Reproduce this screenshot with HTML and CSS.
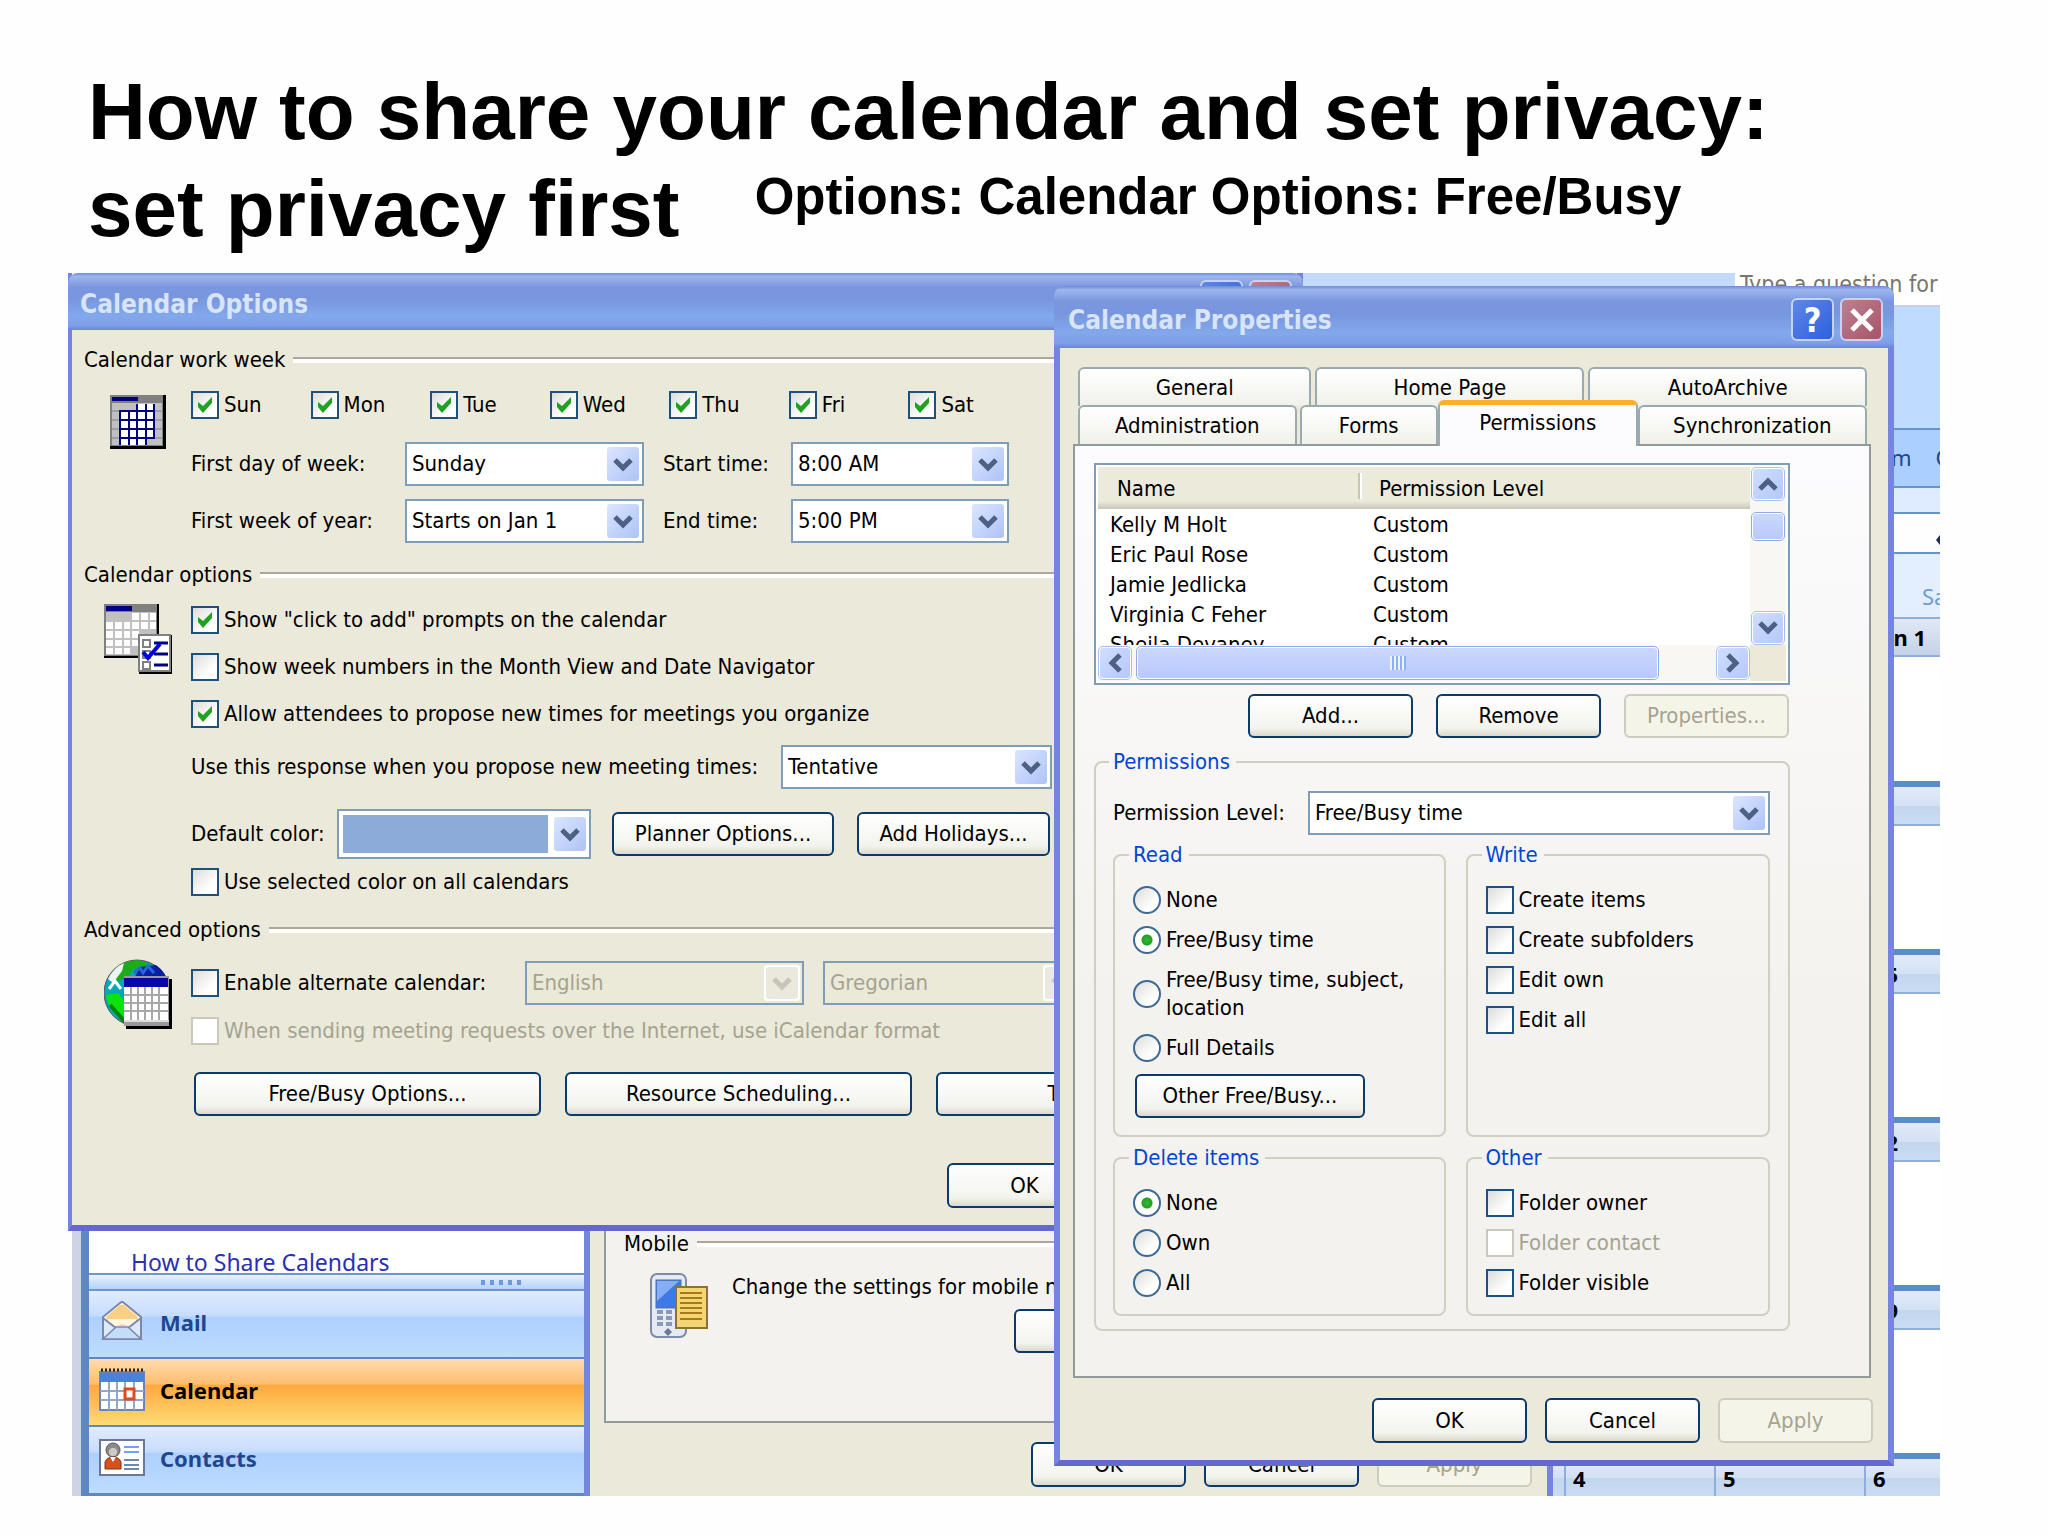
FILE: index.html
```html
<!DOCTYPE html>
<html lang="en">
<head>
  <meta charset="utf-8">
  <title>How to share your calendar</title>
  <link rel="stylesheet" href="styles.css">
</head>
<body>
  <h1>How to share your calendar and set privacy:<br>set privacy first <small>Options: Calendar Options: Free/Busy</small></h1>

  <div class="desktop">

    <!-- Outlook main window -->
    <div class="outlook">
      <div class="menubar"><span>Type a question for</span></div>
      <div class="panes">
        <nav class="sidebar">
          <a class="howto" href="#">How to Share Calendars</a>
          <div class="splitter"><i></i><i></i><i></i><i></i><i></i></div>
          <a class="nav-item" href="#">
            <svg width="44" height="44" viewBox="0 0 44 44">
              <path d="M3 17L20 3q2-2 4 0l17 14v21H3z" fill="#fff" stroke="#7d88a8" stroke-width="2"/>
              <path d="M6 17L20 5q2-1 4 0l14 12-3 9H9z" fill="#f9cf86"/>
              <path d="M8 19h28v10L22 24 8 30z" fill="#fff6e4"/>
              <path d="M3 18l13 10h12l13-10v21H3z" fill="#dbe9fb" stroke="#7d88a8" stroke-width="2"/>
              <path d="M3 39l13-12h12l13 12z" fill="#c3dcf8" stroke="#7d88a8" stroke-width="1.5"/>
            </svg>
            Mail
          </a>
          <a class="nav-item active" href="#">
            <svg width="48" height="44" viewBox="0 0 48 44">
              <rect x="2" y="4" width="44" height="38" fill="#fff" stroke="#6a86b8" stroke-width="2"/>
              <path d="M3 2h42" stroke="#222" stroke-width="3" stroke-dasharray="2 2"/>
              <rect x="2" y="5" width="44" height="9" fill="#4a80de"/>
              <path d="M11 14v28M19 14v28M27 14v28M36 14v28M2 23h44M2 32h44" stroke="#93a6c8" stroke-width="2"/>
              <rect x="27" y="21" width="9" height="10" fill="#fff" stroke="#e0491c" stroke-width="3"/>
            </svg>
            Calendar
          </a>
          <a class="nav-item" href="#">
            <svg width="48" height="40" viewBox="0 0 48 40">
              <rect x="2" y="2" width="44" height="35" fill="#fff" stroke="#6a7896" stroke-width="2"/>
              <circle cx="15" cy="12" r="7" fill="#8b8b8b" stroke="#555"/>
              <circle cx="15" cy="14" r="4" fill="#cfcac6"/>
              <path d="M7 31V24q2-5 8-5t8 5v7z" fill="#d4521d" stroke="#8d3010"/>
              <path d="M12 19l3 5 3-5z" fill="#fff"/>
              <path d="M26 9h15M26 14h15" stroke="#6fa2ea" stroke-width="2"/>
              <path d="M26 22h15M26 27h15M26 31h15" stroke="#6c87b0" stroke-width="2"/>
            </svg>
            Contacts
          </a>
        </nav>
        <div class="month">
          <div class="ribbon"></div>
          <div class="band"><span>m</span><span>Q</span></div>
          <div class="band-pad"></div>
          <div class="searchrow"><svg width="5" height="12" viewBox="0 0 5 12"><path d="M5 1L1 6l4 5z" fill="#1c2c5c"/></svg></div>
          <div class="weekday">Sat</div>
          <div class="weeks">
            <div class="week first"><b></b><b></b><b>Jan 1</b></div>
            <div class="week"><b></b><b></b><b>8</b></div>
            <div class="week"><b></b><b></b><b>15</b></div>
            <div class="week"><b></b><b></b><b>22</b></div>
            <div class="week"><b></b><b></b><b>29</b></div>
            <div class="week"><b>4</b><b>5</b><b>6</b></div>
          </div>
        </div>
      </div>
    </div>

    <!-- Options dialog -->
    <div class="window win-options">
      <div class="window-body">
        <div class="sheet">
          <div class="group-title">Mobile</div>
          <div class="mobile">
            <svg width="60" height="66" viewBox="0 0 60 66">
              <rect x="1" y="1" width="35" height="63" rx="6" fill="#e4e9f2" stroke="#7e8ba8" stroke-width="2"/>
              <rect x="6" y="7" width="25" height="28" fill="#3f79e6" stroke="#5470ac"/>
              <path d="M7 8h22L7 28z" fill="#86aef4"/>
              <path d="M7 39h6M16 39h6M7 45h6M16 45h6M7 51h6M16 51h6" stroke="#8b98b4" stroke-width="4"/>
              <path d="M18 55l4 4-4 4-4-4z" fill="#6a7896"/>
              <rect x="26" y="14" width="31" height="41" fill="#f3d672" stroke="#8c7330" stroke-width="2"/>
              <path d="M30 20h22M30 25h22M30 30h22M30 35h22M30 40h22M30 46h22" stroke="#a9771c" stroke-width="2"/>
            </svg>
            <div>
              <p>Change the settings for mobile notifications</p>
              <button>Notifications...</button>
            </div>
          </div>
        </div>
        <div class="footer">
          <button>OK</button>
          <button>Cancel</button>
          <button disabled>Apply</button>
        </div>
      </div>
    </div>

    <!-- Calendar Options dialog -->
    <div class="window win-calendar">
      <div class="titlebar">
        <span>Calendar Options</span>
        <button class="caption help" aria-label="Help">?</button>
        <button class="caption close" aria-label="Close"><svg width="26" height="26" viewBox="0 0 26 26"><path d="M3 3l20 20M23 3L3 23" stroke="#fff" stroke-width="5"/></svg></button>
      </div>
      <div class="window-body">
        <div class="group-title">Calendar work week</div>
        <div class="group work-week">
          <svg class="group-icon" width="56" height="54" viewBox="0 0 56 54">
            <rect width="56" height="54" fill="#000"/>
            <rect width="53" height="51" fill="#808080"/>
            <rect x="2" y="8" width="50" height="42" fill="#c0c0c0"/>
            <rect x="2" y="2" width="26" height="4" fill="#000080"/>
            <path d="M27 9h17v34h-8v7H10V16h17z" fill="#fff"/>
            <path d="M2 16h50M2 25h50M2 34h50M2 43h50" stroke="#808080"/>
            <path d="M10 50V16h34M27 9v41M44 9v34H10M19 16v34M36 9v41M10 25h34M10 34h34" fill="none" stroke="#000080" stroke-width="2"/>
          </svg>
          <div class="rows">
            <div class="days">
              <label><input type="checkbox" checked>Sun</label>
              <label><input type="checkbox" checked>Mon</label>
              <label><input type="checkbox" checked>Tue</label>
              <label><input type="checkbox" checked>Wed</label>
              <label><input type="checkbox" checked>Thu</label>
              <label><input type="checkbox" checked>Fri</label>
              <label><input type="checkbox" checked>Sat</label>
            </div>
            <div class="times">
              <label for="first-day">First day of week:</label>
              <select id="first-day"><option>Sunday</option></select>
              <label for="start">Start time:</label>
              <select id="start"><option>8:00 AM</option></select>
              <label for="first-week">First week of year:</label>
              <select id="first-week"><option>Starts on Jan 1</option></select>
              <label for="end">End time:</label>
              <select id="end"><option>5:00 PM</option></select>
            </div>
          </div>
        </div>

        <div class="group-title">Calendar options</div>
        <div class="group">
          <svg class="group-icon" width="68" height="70" viewBox="0 0 68 70">
            <rect width="55" height="54" fill="#000"/>
            <rect width="53" height="52" fill="#808080"/>
            <rect x="2" y="8" width="50" height="43" fill="#c0c0c0"/>
            <rect x="2" y="2" width="26" height="5" fill="#000080"/>
            <path d="M28 9h7v7h-7zM37 9h7v7h-7zM46 9h6v7h-6zM2 18h7v7H2zM11 18h7v7h-7zM20 18h6v7h-6zM28 18h7v7h-7zM37 18h7v7h-7zM46 18h6v7h-6zM2 27h7v7H2zM11 27h7v7h-7zM20 27h6v7h-6zM28 27h7v7h-7zM2 36h7v6H2zM11 36h7v6h-7zM20 36h6v6h-6zM28 36h7v6h-7zM2 44h7v6H2zM11 44h7v6h-7zM20 44h6v6h-6z" fill="#fff"/>
            <rect x="35" y="31" width="33" height="39" fill="#000"/>
            <rect x="35" y="31" width="31" height="36" fill="#fff" stroke="#808080" stroke-width="2"/>
            <path d="M39 36h7v7h-7zM39 47h7v7h-7zM39 58h7v7h-7z" fill="#fff" stroke="#808080" stroke-width="2"/>
            <path d="M50 39h14M50 50h14M50 61h14" stroke="#000080" stroke-width="3"/>
            <path d="M39 48l5 6L56 40" fill="none" stroke="#0000e0" stroke-width="4"/>
          </svg>
          <div class="rows">
            <div class="checks">
              <label><input type="checkbox" checked>Show "click to add" prompts on the calendar</label>
              <label><input type="checkbox">Show week numbers in the Month View and Date Navigator</label>
              <label><input type="checkbox" checked>Allow attendees to propose new times for meetings you organize</label>
            </div>
            <div class="response">
              <label for="response">Use this response when you propose new meeting times:</label>
              <select id="response"><option>Tentative</option></select>
            </div>
            <div class="color">
              <label for="color">Default color:</label>
              <div class="swatch-box"><select id="color"><option></option></select><i class="swatch"></i></div>
              <button class="planner">Planner Options...</button>
              <button class="holidays">Add Holidays...</button>
            </div>
            <label class="all-calendars"><input type="checkbox">Use selected color on all calendars</label>
          </div>
        </div>

        <div class="group-title">Advanced options</div>
        <div class="group">
          <svg class="group-icon" width="68" height="70" viewBox="0 0 68 70">
            <ellipse cx="33" cy="34" rx="33" ry="33" fill="#00a8b8" stroke="#555"/>
            <path d="M22 3Q36-2 48 7L42 12 30 10 24 18 14 22 8 16Q14 6 22 3z" fill="#1cab1c"/>
            <path d="M4 20Q10 8 20 4l-2 8-9 12z" fill="#e9f5ee"/>
            <path d="M36 8l16-2q10 7 12 18H24l8-8z" fill="#0a1ea0"/>
            <path d="M30 14l6-5 3 5 5-7 6 7" fill="none" stroke="#2266e0" stroke-width="3"/>
            <path d="M2 36l12-2 8 10v18Q6 56 2 36z" fill="#0be30b"/>
            <path d="M6 46l16 18" stroke="#078407" stroke-width="4"/>
            <path d="M5 30l6-8 6 8" fill="none" stroke="#fff" stroke-width="3"/>
            <path d="M22 20h46v50H22z" fill="#000"/>
            <path d="M20 17h45v50H20z" fill="#9a9a9a"/>
            <path d="M20 19h44v9H20z" fill="#0808a8"/>
            <path d="M20 28h44v33H20z" fill="#fff"/>
            <path d="M27 28v33M34 28v33M41 28v33M48 28v33M55 28v33M20 36h44M20 44h44M20 52h44" stroke="#a8a8a8" stroke-width="2"/>
            <path d="M20 62h45" stroke="#ddd" stroke-width="2"/>
          </svg>
          <div class="rows">
            <div class="alternate">
              <label><input type="checkbox">Enable alternate calendar:</label>
              <select aria-label="Language" disabled><option>English</option></select>
              <select aria-label="Calendar type" disabled><option>Gregorian</option></select>
            </div>
            <label class="ical"><input type="checkbox" disabled>When sending meeting requests over the Internet, use iCalendar format</label>
            <div class="wide-buttons">
              <button>Free/Busy Options...</button>
              <button>Resource Scheduling...</button>
              <button>Time Zone...</button>
            </div>
          </div>
        </div>
        <div class="footer">
          <button>OK</button>
          <button>Cancel</button>
        </div>
      </div>
    </div>

    <!-- Calendar Properties dialog -->
    <div class="window win-properties">
      <div class="titlebar">
        <span>Calendar Properties</span>
        <button class="caption help" aria-label="Help">?</button>
        <button class="caption close" aria-label="Close"><svg width="26" height="26" viewBox="0 0 26 26"><path d="M3 3l20 20M23 3L3 23" stroke="#fff" stroke-width="5"/></svg></button>
      </div>
      <div class="window-body">
        <div class="tabs tabs-back">
          <button class="tab">General</button>
          <button class="tab">Home Page</button>
          <button class="tab">AutoArchive</button>
        </div>
        <div class="tabs tabs-front">
          <button class="tab">Administration</button>
          <button class="tab">Forms</button>
          <button class="tab selected">Permissions</button>
          <button class="tab">Synchronization</button>
        </div>
        <div class="sheet">
          <div class="list">
            <div class="list-view">
              <table>
                <thead>
                  <tr><th>Name</th><th>Permission Level</th></tr>
                </thead>
                <tbody>
                  <tr><td>Kelly M Holt</td><td>Custom</td></tr>
                  <tr><td>Eric Paul Rose</td><td>Custom</td></tr>
                  <tr><td>Jamie Jedlicka</td><td>Custom</td></tr>
                  <tr><td>Virginia C Feher</td><td>Custom</td></tr>
                  <tr><td>Sheila Devaney</td><td>Custom</td></tr>
                </tbody>
              </table>
            </div>
            <div class="vscroll">
              <button aria-label="Scroll up"><svg width="20" height="14" viewBox="0 0 20 14"><path d="M2 12l8-8 8 8" fill="none" stroke="#4d6185" stroke-width="5"/></svg></button>
              <i class="thumb"></i>
              <button aria-label="Scroll down"><svg width="20" height="14" viewBox="0 0 20 14"><path d="M2 2l8 8 8-8" fill="none" stroke="#4d6185" stroke-width="5"/></svg></button>
            </div>
            <div class="hscroll">
              <button aria-label="Scroll left"><svg width="14" height="20" viewBox="0 0 14 20"><path d="M12 2l-8 8 8 8" fill="none" stroke="#4d6185" stroke-width="5"/></svg></button>
              <i class="thumb"></i>
              <button aria-label="Scroll right"><svg width="14" height="20" viewBox="0 0 14 20"><path d="M2 2l8 8-8 8" fill="none" stroke="#4d6185" stroke-width="5"/></svg></button>
            </div>
          </div>
          <div class="list-buttons">
            <button>Add...</button>
            <button>Remove</button>
            <button disabled>Properties...</button>
          </div>
          <fieldset class="permissions">
            <legend>Permissions</legend>
            <div class="level">
              <label for="level">Permission Level:</label>
              <select id="level"><option>Free/Busy time</option></select>
            </div>
            <div class="rights">
              <fieldset>
                <legend>Read</legend>
                <label><input type="radio" name="read">None</label>
                <label><input type="radio" name="read" checked>Free/Busy time</label>
                <label><input type="radio" name="read">Free/Busy time, subject,<br>location</label>
                <label><input type="radio" name="read">Full Details</label>
                <button>Other Free/Busy...</button>
              </fieldset>
              <fieldset>
                <legend>Write</legend>
                <label><input type="checkbox">Create items</label>
                <label><input type="checkbox">Create subfolders</label>
                <label><input type="checkbox">Edit own</label>
                <label><input type="checkbox">Edit all</label>
              </fieldset>
              <fieldset>
                <legend>Delete items</legend>
                <label><input type="radio" name="delete" checked>None</label>
                <label><input type="radio" name="delete">Own</label>
                <label><input type="radio" name="delete">All</label>
              </fieldset>
              <fieldset>
                <legend>Other</legend>
                <label><input type="checkbox">Folder owner</label>
                <label class="off"><input type="checkbox" disabled>Folder contact</label>
                <label><input type="checkbox">Folder visible</label>
              </fieldset>
            </div>
          </fieldset>
        </div>
        <div class="footer">
          <button>OK</button>
          <button>Cancel</button>
          <button disabled>Apply</button>
        </div>
      </div>
    </div>

  </div>
</body>
</html>
```

FILE: styles.css
```css
* {
  box-sizing: border-box;
}

body {
  margin: 0;
  min-height: 100vh;
  padding: 63px 108px 40px 68px;
  display: flex;
  flex-direction: column;
  background: #fefefe;
  color: #000;
  font: 22px/28px "DejaVu Sans Condensed", "DejaVu Sans", sans-serif;
}

h1 {
  margin: 0 0 16px 20px;
  font: bold 80px/97px "Liberation Sans", Arial, sans-serif;
}

h1 small {
  margin-left: 53px;
  font-size: 51px;
  line-height: 51px;
  vertical-align: 22px;
}

button, select, input {
  font: inherit;
  color: inherit;
  margin: 0;
}

.desktop {
  position: relative;
  flex: 1;
  overflow: hidden;
}

/* ---------- controls ---------- */

label {
  display: flex;
  align-items: center;
  white-space: nowrap;
}

input {
  appearance: none;
  flex: none;
  margin-right: 5px;
}

input[type="checkbox"] {
  width: 28px;
  height: 28px;
  border: 2px solid #1c5180;
  background: linear-gradient(135deg, #dcdcd7, #fff 70%);
}

input[type="checkbox"]:checked {
  background: url('data:image/svg+xml,<svg xmlns="http://www.w3.org/2000/svg" viewBox="0 0 24 24"><path d="M5 9v5l5 6 9-10V4l-9 9z" fill="%2321a121"/></svg>'), linear-gradient(135deg, #dcdcd7, #fff 70%);
}

input[type="checkbox"]:disabled {
  border-color: #cac8bb;
  background: #fff;
}

input[type="radio"] {
  width: 28px;
  height: 28px;
  border: 2px solid #3d6a94;
  border-radius: 50%;
  background: linear-gradient(135deg, #dcdcd7, #fff 70%);
}

input[type="radio"]:checked {
  background: radial-gradient(circle, #35b935 0, #21a121 5px, #fff 6px);
}

select {
  appearance: none;
  height: 44px;
  padding: 0 44px 1px 5px;
  border: 2px solid #7f9db9;
  border-radius: 0;
  background: #fff url('data:image/svg+xml,<svg xmlns="http://www.w3.org/2000/svg" width="32" height="34" viewBox="0 0 32 34"><defs><linearGradient id="g" x2="1" y2="1"><stop stop-color="%23dbe5fe"/><stop offset="1" stop-color="%23adc3f8"/></linearGradient></defs><rect width="32" height="34" rx="3" fill="url(%23g)"/><path d="M8 13l8 8 8-8" fill="none" stroke="%234d6185" stroke-width="5"/></svg>') no-repeat right 3px center;
}

select:disabled {
  opacity: 1;
  color: #a5a391;
  background: #ebe9d8 url('data:image/svg+xml,<svg xmlns="http://www.w3.org/2000/svg" width="36" height="36" viewBox="0 0 36 36"><rect width="36" height="36" rx="3" fill="%23fff"/><rect x="2" y="2" width="32" height="32" rx="3" fill="%23ebe9dd"/><path d="M10 14l8 8 8-8" fill="none" stroke="%23c6c5b8" stroke-width="5"/></svg>') no-repeat right 2px center;
}

button {
  height: 44px;
  padding: 0;
  border: 2px solid #0b3a6b;
  border-radius: 6px;
  background: linear-gradient(#fff, #f3f3ee 80%, #dcd8cc);
}

button:disabled {
  border-color: #cdccbf;
  background: #f5f4e8;
  color: #a5a391;
}

.footer {
  display: flex;
  justify-content: flex-end;
  gap: 18px;
}

.footer button {
  width: 155px;
  height: 45px;
}

.sheet {
  border: 2px solid #919b9c;
  background: linear-gradient(#fcfcfe, #f4f2ee 60%);
}

.group-title {
  display: flex;
  align-items: center;
  gap: 8px;
  height: 30px;
}

.group-title::after {
  content: "";
  flex: 1;
  height: 4px;
  border-top: 2px solid #aca899;
  background: #fff;
}

/* ---------- windows ---------- */

.window {
  position: absolute;
  display: flex;
  flex-direction: column;
  border: solid #7584e0;
  border-width: 0 6px 6px;
  border-bottom-color: #6468cf;
  background: #ebe9d9;
}

.window-body {
  flex: 1;
  display: flex;
  flex-direction: column;
}

.titlebar {
  display: flex;
  align-items: center;
  gap: 6px;
  margin: 0 -6px;
  padding: 5px 11px 0 14px;
  border-radius: 10px 10px 0 0;
  background: linear-gradient(#6f8ad8, #9db6ee 6%, #7a96df 25%, #7896de 45%, #82a8eb 75%, #7f9fe8 92%, #6d83da);
  color: #d8e4f8;
  font: bold 26px/30px "DejaVu Sans Condensed", "DejaVu Sans", sans-serif;
}

.titlebar span {
  flex: 1;
}

.caption {
  display: flex;
  align-items: center;
  justify-content: center;
  width: 43px;
  height: 43px;
  border-color: #c5d4f6;
  border-radius: 6px;
  color: #fff;
  font: bold 34px/34px "DejaVu Sans Condensed", sans-serif;
}

.help {
  background: linear-gradient(135deg, #5f87e6, #2d5fe0);
}

.close {
  background: linear-gradient(135deg, #bd7f91, #a85468);
}

/* ---------- Outlook ---------- */

.outlook {
  position: absolute;
  inset: 0;
  display: flex;
  flex-direction: column;
  font-family: "Noto Sans", sans-serif;
}

.menubar {
  display: flex;
  flex: none;
  justify-content: flex-end;
  height: 32px;
  background: #c4dafa;
}

.menubar span {
  width: 205px;
  padding-left: 5px;
  overflow: hidden;
  background: #fff;
  color: #77756c;
  font: 23px/22px "DejaVu Sans Condensed", sans-serif;
  white-space: nowrap;
}

.panes {
  flex: 1;
  min-height: 0;
  display: flex;
  justify-content: space-between;
}

.sidebar {
  display: flex;
  flex-direction: column;
  justify-content: flex-end;
  width: 516px;
  margin-left: 4px;
  padding: 0 0 1px 8px;
  border-left: 9px solid #ced4e4;
  background: #5f88c1;
}

.howto {
  height: 52px;
  padding: 27px 0 0 42px;
  overflow: hidden;
  background: #fff;
  color: #2b2fb0;
  font-size: 23px;
  text-decoration: none;
}

.splitter {
  display: flex;
  gap: 5px;
  height: 18px;
  padding: 5px 0 0 392px;
  border: solid #6c96d2;
  border-width: 2px 0;
  background: linear-gradient(#e8f1ff, #b3d2fb);
}

.splitter i {
  width: 4px;
  height: 5px;
  background: #6c9adb;
}

.nav-item {
  display: flex;
  align-items: center;
  height: 68px;
  padding: 0 0 4px 9px;
  border-bottom: 2px solid #5f88c1;
  background: linear-gradient(#e0ecff, #c6dcfc 38%, #acd0ff 40%, #bfdcff);
  color: #1f478b;
  font-weight: bold;
  text-decoration: none;
}

.nav-item svg {
  width: 48px;
  margin-right: 14px;
}

.nav-item.active {
  background: linear-gradient(#ffdcae, #ffbd70 38%, #ffa93c 40%, #fddb75);
  color: #000;
}

.month {
  display: flex;
  flex-direction: column;
  width: 387px;
  overflow: hidden;
}

.month > * {
  flex: none;
}

.ribbon {
  height: 123px;
  border-top: 2px solid #c9cfe8;
  background: #bfdbff;
}

.band {
  display: flex;
  gap: 24px;
  height: 60px;
  padding: 13px 0 0 338px;
  border: solid #6593cf;
  border-width: 2px 0;
  background: #abd0ff;
  color: #1f478b;
}

.band-pad {
  height: 26px;
  border-bottom: 2px solid #6593cf;
  background: #dfecff;
}

.searchrow {
  display: flex;
  align-items: center;
  justify-content: flex-end;
  height: 40px;
  padding-top: 14px;
  border-bottom: 2px solid #6593cf;
}

.weekday {
  height: 63px;
  padding: 28px 0 0 369px;
  background: #e3efff;
  color: #6f9bd8;
}

.week {
  display: grid;
  grid-template-columns: 150px 150px 76px;
  height: 168px;
  padding-left: 11px;
  background: linear-gradient(#5c8bcb 6px, #e2eaf8 6px, #d3e1f3 25px, #c3d6ee 25px, #c9dcf3 43px, #8faedd 43px, #8faedd 45px, #fff 45px);
}

.week.first {
  height: 164px;
  background: linear-gradient(#8faedd 2px, #e2e8f4 2px, #c3d2e8 38px, #8faedd 38px, #8faedd 40px, #fff 40px);
}

.week b {
  padding: 11px 0 0 7px;
  border-left: 2px solid #8faedd;
}

.week.first b {
  padding-top: 6px;
}

/* ---------- Options ---------- */

.win-options {
  left: 516px;
  top: 600px;
  width: 969px;
  height: 640px;
}

.win-options .window-body {
  justify-content: flex-end;
  padding: 0 15px 20px 14px;
}

.win-options .sheet {
  height: 480px;
  margin-bottom: 19px;
  padding: 284px 18px 0;
}

.mobile {
  display: flex;
  gap: 22px;
  padding: 14px 0 0 26px;
}

.mobile p {
  margin: 0 0 8px;
}

.mobile button {
  width: 260px;
  margin-left: 282px;
}

/* ---------- Calendar Options ---------- */

.win-calendar {
  left: 0;
  top: 0;
  width: 1235px;
  border-left-width: 4px;
}

.win-calendar .titlebar {
  align-items: flex-start;
  height: 57px;
  margin-left: -4px;
  padding: 16px 11px 0 12px;
}

.win-calendar .caption {
  margin-top: -9px;
}

.win-calendar .window-body {
  padding: 15px 12px 17px;
}

.group {
  display: flex;
  margin-bottom: 19px;
}

.work-week {
  margin-bottom: 17px;
}

.group-icon {
  flex: none;
  margin: 14px 19px 0 20px;
}

.work-week .group-icon {
  margin: 20px 25px 0 26px;
}

.rows {
  flex: 1;
  padding-top: 16px;
}

.rows > * {
  margin-bottom: 20px;
}

.rows > :last-child {
  margin-bottom: 0;
}

.days {
  display: grid;
  grid-template-columns: repeat(7, 1fr);
  width: 837px;
}

.rows > .days {
  margin-bottom: 23px;
}

.times {
  display: grid;
  grid-template-columns: 214px 258px 128px 218px;
  row-gap: 13px;
}

#first-day, #first-week {
  width: 239px;
}

.checks {
  display: grid;
  gap: 19px;
}

.rows > .checks {
  margin-bottom: 17px;
}

.response {
  display: grid;
  grid-template-columns: 590px 271px;
}

.color {
  display: flex;
  align-items: center;
}

.rows > .color {
  margin-bottom: 9px;
}

.color label {
  width: 146px;
}

.swatch-box {
  position: relative;
}

.swatch-box select {
  display: block;
  width: 254px;
  height: 50px;
}

.swatch {
  position: absolute;
  left: 6px;
  top: 6px;
  width: 205px;
  height: 38px;
  background: #8dabd8;
}

.planner {
  width: 222px;
  margin: 0 23px 0 21px;
}

.holidays {
  width: 193px;
}

.alternate {
  display: grid;
  grid-template-columns: 334px 279px 279px;
}

.alternate select + select {
  margin-left: 19px;
}

.rows > .alternate {
  margin-bottom: 12px;
}

.ical {
  color: #a5a391;
}

.rows > .ical {
  margin-bottom: 27px;
}

.wide-buttons {
  display: flex;
  gap: 24px;
  padding-left: 3px;
}

.wide-buttons button {
  width: 347px;
}

.win-calendar .footer {
  margin-top: 28px;
  padding-right: 10px;
}

/* ---------- Calendar Properties ---------- */

.win-properties {
  left: 986px;
  top: 13px;
  width: 840px;
  border-radius: 10px 10px 0 0;
}

.win-properties .titlebar {
  height: 62px;
}

.win-properties .window-body {
  padding: 19px 15px 17px 13px;
}

.tabs {
  display: flex;
  margin: 0 6px 0 5px;
}

.tab {
  height: 39px;
  border: 2px solid #9aabb0;
  border-bottom: 0;
  border-radius: 6px 6px 0 0;
  background: linear-gradient(#fff, #f1f1ea);
}

.tabs-back {
  height: 38px;
  gap: 4px;
}

.tabs-back .tab {
  flex: 233;
}

.tabs-back .tab:nth-child(2) {
  flex: 269;
}

.tabs-back .tab:nth-child(3) {
  flex: 279;
}

.tabs-front .tab:nth-child(1) {
  flex: 219;
  margin-right: 3px;
}

.tabs-front .tab:nth-child(2) {
  flex: 137;
}

.tabs-front .tab:nth-child(4) {
  flex: 230;
}

.tabs-front .selected {
  flex: 200;
  z-index: 1;
  height: 46px;
  margin: -5px 0 -2px;
  padding-bottom: 6px;
  border-top: 5px solid #fbb02c;
  background: #fcfcfe;
}

.win-properties .sheet {
  margin: 0 2px 20px 0;
  padding: 17px 79px 45px 19px;
}

.list {
  display: grid;
  grid-template-columns: 1fr 36px;
  grid-template-rows: 178px 36px;
  padding: 2px;
  border: 2px solid #7f9db9;
  background: #fff;
}

.list-view {
  overflow: hidden;
}

table {
  width: 100%;
  border-collapse: collapse;
}

th {
  height: 42px;
  padding: 2px 0 0 19px;
  background: linear-gradient(#ebeadb 34px, #cbc7b8);
  font-weight: normal;
  text-align: left;
}

th + th {
  width: 392px;
  padding-left: 21px;
  background: linear-gradient(90deg, #c7c5b2 2px, #fff 2px, #fff 4px, transparent 4px) no-repeat 0 6px / 4px 26px, linear-gradient(#ebeadb 34px, #cbc7b8);
}

td {
  height: 30px;
  padding: 2px 0 0 12px;
}

td + td {
  padding-left: 15px;
}

.vscroll, .hscroll {
  display: flex;
  background: #f8f7f3;
}

.vscroll {
  flex-direction: column;
  align-items: center;
}

.hscroll {
  grid-column: 1 / 3;
  align-items: center;
  padding-right: 36px;
  background: linear-gradient(90deg, #f8f7f3 652px, #ece9d8 652px);
}

.vscroll button, .hscroll button {
  display: flex;
  align-items: center;
  justify-content: center;
  width: 34px;
  height: 34px;
  border: 2px solid #fff;
  outline: 1px solid #a9bfee;
  outline-offset: -1px;
  border-radius: 5px;
  background: linear-gradient(135deg, #d0defd, #b4c8fa);
}

.thumb {
  border: 2px solid #fff;
  outline: 1px solid #8fabe4;
  outline-offset: -1px;
  border-radius: 5px;
  background: linear-gradient(#cad8fd, #b9c9fa);
}

.vscroll .thumb {
  width: 34px;
  height: 29px;
  margin: 11px 0 auto;
}

.hscroll .thumb {
  width: 523px;
  height: 34px;
  margin: 0 auto 0 4px;
  background: repeating-linear-gradient(90deg, #eef4fe 0 2px, #8cb0f8 2px 4px) no-repeat center / 16px 14px, linear-gradient(#cad8fd, #b9c9fa);
}

.list-buttons {
  display: flex;
  justify-content: flex-end;
  gap: 23px;
  margin: 9px 1px 10px 0;
}

.list-buttons button {
  width: 165px;
}

fieldset {
  min-width: 0;
  margin: 0;
  padding: 17px 16px 17px 18px;
  border: 2px solid #d0d0c2;
  border-radius: 8px;
}

legend {
  margin-left: -4px;
  padding: 0 6px 0 4px;
  color: #0046d5;
}

.permissions {
  padding: 15px 18px 13px 17px;
}

.level {
  display: flex;
  justify-content: space-between;
  margin-bottom: 6px;
}

.level select {
  width: 462px;
}

.rights {
  display: grid;
  grid-template-columns: 332fr 304fr;
  gap: 7px 20px;
}

.rights label {
  margin-bottom: 12px;
}

.rights label:last-child {
  margin-bottom: 0;
}

.rights button {
  width: 230px;
  margin-left: 2px;
}

.off {
  color: #a5a391;
}
```
